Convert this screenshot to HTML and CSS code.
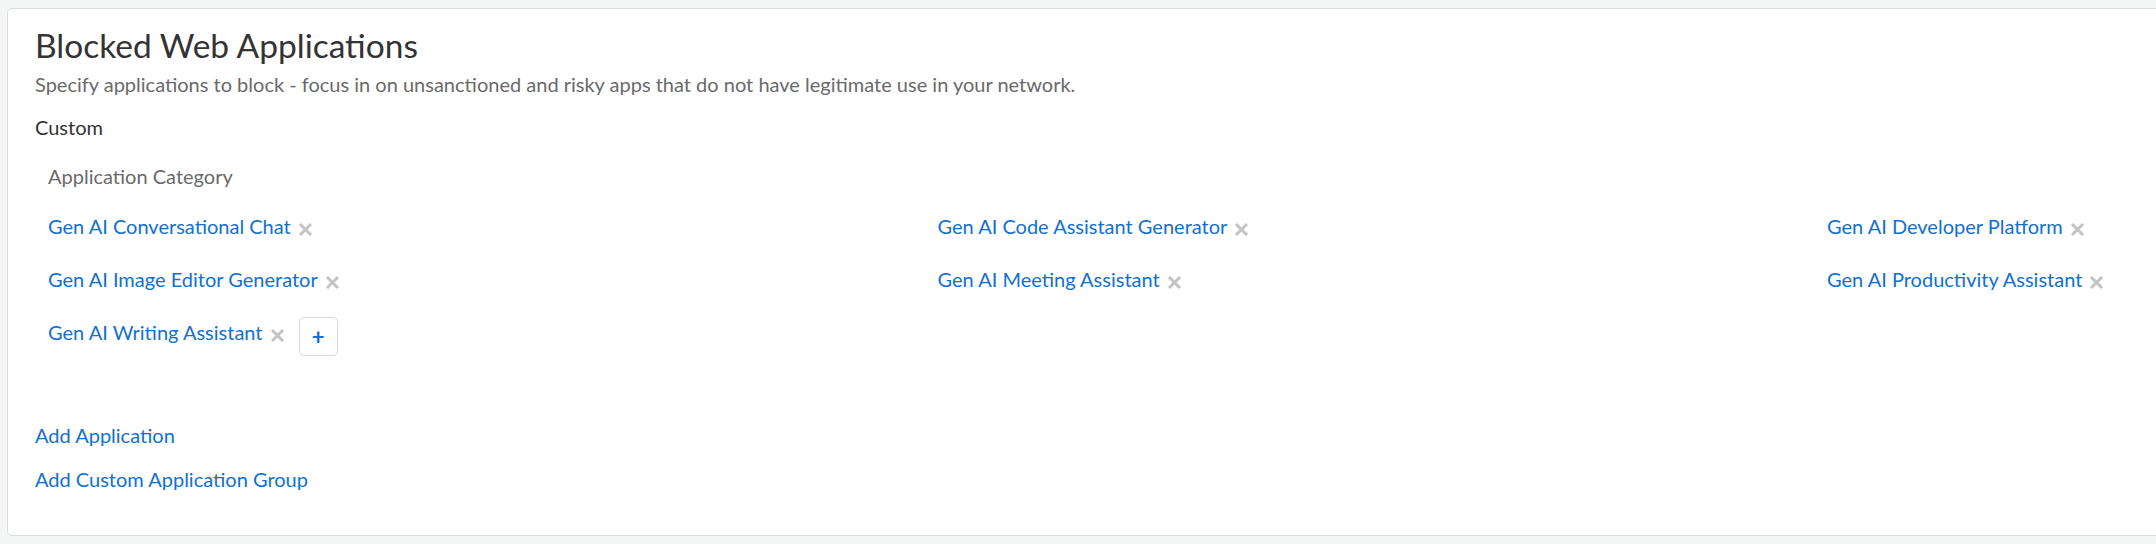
FILE: index.html
```html
<!DOCTYPE html>
<html lang="en">
<head>
<meta charset="utf-8">
<title>Blocked Web Applications</title>
<link rel="stylesheet" href="styles.css">
</head>
<body>
<section class="card">
  <h1 class="title">Blocked Web Applications</h1>
  <p class="subtitle">Specify applications to block - focus in on unsanctioned and risky apps that do not have legitimate use in your network.</p>
  <div class="section-label">Custom</div>
  <div class="category">
    <div class="category-label">Application Category</div>
    <div class="chips">
      <div class="chip"><a class="chip-link" href="#">Gen AI Conversational Chat</a><span class="remove"><svg viewBox="0 0 15 15" width="15" height="15"><path d="M2 2L13 13M13 2L2 13" /></svg></span></div>
      <div class="chip"><a class="chip-link" href="#">Gen AI Code Assistant Generator</a><span class="remove"><svg viewBox="0 0 15 15" width="15" height="15"><path d="M2 2L13 13M13 2L2 13" /></svg></span></div>
      <div class="chip"><a class="chip-link" href="#">Gen AI Developer Platform</a><span class="remove"><svg viewBox="0 0 15 15" width="15" height="15"><path d="M2 2L13 13M13 2L2 13" /></svg></span></div>
      <div class="chip"><a class="chip-link" href="#">Gen AI Image Editor Generator</a><span class="remove"><svg viewBox="0 0 15 15" width="15" height="15"><path d="M2 2L13 13M13 2L2 13" /></svg></span></div>
      <div class="chip"><a class="chip-link" href="#">Gen AI Meeting Assistant</a><span class="remove"><svg viewBox="0 0 15 15" width="15" height="15"><path d="M2 2L13 13M13 2L2 13" /></svg></span></div>
      <div class="chip"><a class="chip-link" href="#">Gen AI Productivity Assistant</a><span class="remove"><svg viewBox="0 0 15 15" width="15" height="15"><path d="M2 2L13 13M13 2L2 13" /></svg></span></div>
      <div class="chip"><a class="chip-link" href="#">Gen AI Writing Assistant</a><span class="remove"><svg viewBox="0 0 15 15" width="15" height="15"><path d="M2 2L13 13M13 2L2 13" /></svg></span><button class="add-btn" type="button">+</button></div>
    </div>
  </div>
  <div class="actions">
    <a class="action-link" href="#">Add Application</a>
    <a class="action-link" href="#">Add Custom Application Group</a>
  </div>
</section>
</body>
</html>
```
FILE: styles.css
```css
html, body {
  margin: 0;
  padding: 0;
  overflow: hidden;
  background: #f4f5f5;
  font-family: Lato, "Open Sans", sans-serif;
}

.card {
  box-sizing: border-box;
  width: 2800px;
  margin: 8px 0 0 7px;
  background: #ffffff;
  border: 1px solid #dcdddd;
  border-radius: 5px;
  padding: 16px 0 44px 27px;
}

.title {
  margin: 0;
  font-size: 33.5px;
  line-height: 40px;
  font-weight: 400;
  color: #333333;
}

.subtitle {
  margin: 7px 0 0;
  font-size: 20px;
  line-height: 24px;
  color: #6a6a6a;
}

.section-label {
  margin-top: 19px;
  font-size: 20px;
  line-height: 24px;
  color: #333333;
}

.category {
  margin-top: 25px;
  padding-left: 13px;
}

.category-label {
  font-size: 20px;
  line-height: 24px;
  color: #6a6a6a;
}

.chips {
  margin-top: 19px;
  display: grid;
  grid-template-columns: repeat(3, 889.5px);
  grid-auto-rows: 38px;
  row-gap: 15px;
}

.chip {
  display: flex;
  align-items: flex-start;
}

.chip-link {
  font-size: 20px;
  line-height: 38px;
  color: #1170d3;
  text-decoration: none;
}

.remove {
  display: flex;
  margin: 15px 0 0 7px;
}

.remove svg {
  stroke: #c3c3c3;
  stroke-width: 3;
  fill: none;
}

.add-btn {
  box-sizing: border-box;
  width: 39px;
  height: 39px;
  margin: 4px 0 0 14px;
  padding: 0;
  background: #ffffff;
  border: 1px solid #d8d8d8;
  border-radius: 5px;
  color: #1170d3;
  font-family: Lato, sans-serif;
  font-size: 22px;
  font-weight: 700;
  line-height: 35px;
  cursor: pointer;
}

.actions {
  margin-top: 72px;
  display: flex;
  flex-direction: column;
  align-items: flex-start;
  row-gap: 20px;
}

.action-link {
  font-size: 20px;
  line-height: 24px;
  color: #1170d3;
  text-decoration: none;
}
```
